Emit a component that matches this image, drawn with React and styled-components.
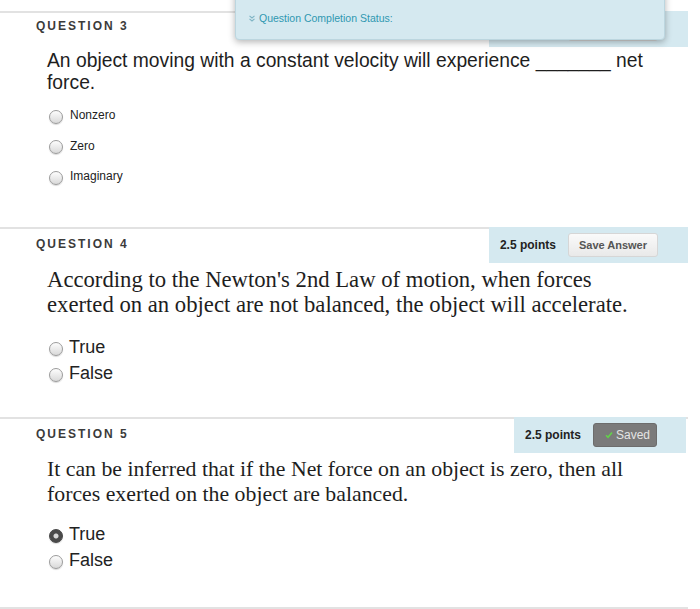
import styled, { createGlobalStyle } from 'styled-components';

const GlobalStyle = createGlobalStyle`
  html, body {
    margin: 0;
    padding: 0;
    background: #fff;
  }
  body {
    font-family: "Liberation Sans", Arial, sans-serif;
    color: #222;
  }
`;

const Page = styled.main`
  position: relative;
  width: 700px;
  height: 609px;
  padding-top: 11px;
  box-sizing: border-box;
  overflow: hidden;
`;

const Question = styled.section`
  margin-right: 12px;
  border-top: 2px solid #e2e2e2;
  padding-bottom: ${props => props.$bottom}px;
`;

const Header = styled.header`
  display: flex;
  align-items: flex-start;
  justify-content: space-between;
  height: 34px;
  padding-left: 36px;
`;

const Label = styled.h2`
  margin: 0;
  padding-top: ${props => props.$top}px;
  font-size: 12px;
  line-height: 14px;
  font-weight: bold;
  letter-spacing: 2px;
  color: #3b3b3b;
`;

const PointsBox = styled.div`
  display: flex;
  align-items: center;
  gap: 12px;
  height: 36px;
  margin-top: -2px;
  padding: 0 ${props => (props.$saved ? 29 : 30)}px 0 11px;
  margin-right: ${props => (props.$saved ? 2 : 0)}px;
  background: #d5e9f0;
`;

const Points = styled.span`
  font-size: 12px;
  font-weight: bold;
  color: #222;
`;

const SaveButton = styled.button`
  height: 24px;
  padding: 0 10px;
  font-family: "Liberation Sans", Arial, sans-serif;
  font-size: 11px;
  font-weight: bold;
  color: #555;
  background: linear-gradient(#fafafa, #e9e9e9);
  border: 1px solid #d6d6d6;
  border-radius: 3px;
`;

const SavedButton = styled.button`
  display: flex;
  align-items: center;
  gap: 3px;
  height: 24px;
  width: 64px;
  padding: 0 0 0 11px;
  font-family: "Liberation Sans", Arial, sans-serif;
  font-size: 12px;
  color: #e4e4e4;
  background: #7a7a7a;
  border: 1px solid #6c6c6c;
  border-radius: 3px;
`;

const Body = styled.div`
  padding-left: 47px;
  padding-top: ${props => props.$top}px;
`;

const Prompt = styled.p`
  margin: 0;
  width: ${props => (props.$serif ? 600 : 610)}px;
  font-family: ${props =>
    props.$serif ? '"Liberation Serif", "Times New Roman", serif' : '"Liberation Sans", Arial, sans-serif'};
  font-size: ${props => props.$size}px;
  line-height: ${props => (props.$serif ? 25 : 22)}px;
  color: #1e1e1e;
`;

const Options = styled.div`
  display: flex;
  flex-direction: column;
  margin-top: ${props => props.$gap}px;
  margin-left: 2px;
`;

const Option = styled.label`
  display: flex;
  align-items: center;
  gap: ${props => (props.$small ? 7 : 6)}px;
  height: ${props => (props.$small ? 30.5 : 26)}px;
  font-size: ${props => (props.$small ? 12 : 18)}px;
  color: #222;
`;

const Radio = styled.span`
  width: 14px;
  height: 14px;
  box-sizing: border-box;
  border-radius: 50%;
  border: 1px solid ${props => (props.$checked ? '#444' : '#9b9b9b')};
  background: ${props =>
    props.$checked
      ? 'radial-gradient(circle, #d8d8d8 0 2px, #4a4a4a 3px)'
      : 'linear-gradient(#fdfdfd, #d9d9d9)'};
  box-shadow: 0 1px 1px rgba(0, 0, 0, 0.15);
  margin-top: ${props => (props.$small ? 3 : 2)}px;
`;

const StatusPopup = styled.div`
  position: absolute;
  left: 235px;
  top: -10px;
  width: 430px;
  height: 50px;
  box-sizing: border-box;
  display: flex;
  align-items: flex-end;
  gap: 4px;
  padding: 0 0 15px 13px;
  background: #d5e9f0;
  border: 1px solid #bcd6df;
  border-radius: 0 0 4px 4px;
  box-shadow: 0 2px 7px rgba(0, 0, 0, 0.3);
  font-size: 10.5px;
  color: #2f98b0;
`;

function Chevrons() {
  return (
    <svg width="6" height="7" viewBox="0 0 6 7" style={{ marginBottom: 2 }}>
      <path d="M0.5 0.8 L3 3 L5.5 0.8 M0.5 3.8 L3 6 L5.5 3.8" fill="none" stroke="#7fb4c4" strokeWidth="1.1" />
    </svg>
  );
}

function Check() {
  return (
    <svg width="8" height="8" viewBox="0 0 8 8">
      <path d="M1 4.3 L3 6.3 L7 1.5" fill="none" stroke="#62d24a" strokeWidth="1.6" />
    </svg>
  );
}

const questions = [
  {
    id: 3,
    serif: false,
    size: 19.3,
    gap: 6,
    bottom: 35,
    label: 6,
    text: 'An object moving with a constant velocity will experience _______ net force.',
    options: ['Nonzero', 'Zero', 'Imaginary'],
    checked: -1,
    saved: false,
  },
  {
    id: 4,
    serif: true,
    size: 22.7,
    gap: 18,
    bottom: 30,
    label: 8,
    text: "According to the Newton's 2nd Law of motion, when forces exerted on an object are not balanced, the object will accelerate.",
    options: ['True', 'False'],
    checked: -1,
    saved: false,
  },
  {
    id: 5,
    serif: true,
    size: 21.8,
    gap: 15,
    bottom: 33,
    label: 8,
    text: 'It can be inferred that if the Net force on an object is zero, then all forces exerted on the object are balanced.',
    options: ['True', 'False'],
    checked: 0,
    saved: true,
  },
];

export default function App() {
  return (
    <>
      <GlobalStyle />
      <Page>
        {questions.map(q => {
          const small = !q.serif;
          return (
            <Question key={q.id} $bottom={q.bottom}>
              <Header>
                <Label $top={q.label}>QUESTION {q.id}</Label>
                <PointsBox $saved={q.saved}>
                  <Points>2.5 points</Points>
                  {q.saved ? (
                    <SavedButton>
                      <Check />
                      Saved
                    </SavedButton>
                  ) : (
                    <SaveButton>Save Answer</SaveButton>
                  )}
                </PointsBox>
              </Header>
              <Body $top={small ? 3 : 4}>
                <Prompt $serif={q.serif} $size={q.size}>
                  {q.text}
                </Prompt>
                <Options $gap={q.gap}>
                  {q.options.map((opt, i) => (
                    <Option key={opt} $small={small}>
                      <Radio $small={small} $checked={q.checked === i} />
                      {opt}
                    </Option>
                  ))}
                </Options>
              </Body>
            </Question>
          );
        })}
        <Question $bottom={0} />
        <StatusPopup>
          <Chevrons />
          Question Completion Status:
        </StatusPopup>
      </Page>
    </>
  );
}
